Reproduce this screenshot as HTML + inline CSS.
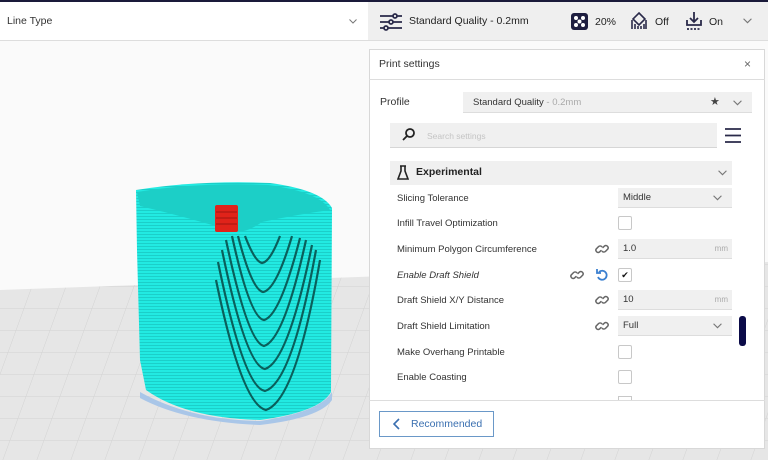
<!DOCTYPE html>
<html><head><meta charset="utf-8"><style>
*{margin:0;padding:0;box-sizing:border-box}
body{width:768px;height:460px;overflow:hidden;position:relative;background:#fafafa;font-family:"Liberation Sans",sans-serif;color:#1d1d2e}
.a{position:absolute}
.t{font-size:9.5px;color:#333}
.inp{position:absolute;left:618px;width:114px;height:20px;background:#f0f0f0;border-bottom:1px solid #ddd;font-size:9.5px;padding:4px 0 0 5px;color:#333}
.cb{position:absolute;left:618px;width:14px;height:14px;border:1px solid #c8c8c8;border-radius:2px;background:#fff}
.chev{position:absolute;right:10px;top:7px}
</style></head><body>
<svg width="0" height="0" style="position:absolute"><defs>
<symbol id="chv" viewBox="0 0 8 5"><path d="M0.5 0.5L4 4L7.5 0.5" fill="none" stroke="#777" stroke-width="1"/></symbol>
<symbol id="lnk" viewBox="0 0 14 14"><g fill="none" stroke="#666" stroke-width="1.5" stroke-linecap="round"><path d="M6 8.5L4.5 10a2.3 2.3 0 0 1-3.2-3.2L3.5 4.6a2.3 2.3 0 0 1 3.2 0"/><path d="M8 5.5L9.5 4a2.3 2.3 0 0 1 3.2 3.2L10.5 9.4a2.3 2.3 0 0 1-3.2 0"/></g></symbol>
</defs></svg>
<div class="a" style="left:0;top:0;width:768px;height:2px;background:#1a1a3a"></div>
<svg class="a" style="left:0;top:41px" width="768" height="419" viewBox="0 41 768 419">
<defs>
<pattern id="st" width="4" height="3" patternUnits="userSpaceOnUse"><rect width="4" height="3" fill="#22eae2"/><rect width="4" height="1" fill="#0f9e9a" opacity=".35"/></pattern>
<pattern id="grid" width="34" height="22" patternUnits="userSpaceOnUse" patternTransform="skewX(-20)"><rect width="34" height="22" fill="#e6e6e6"/><path d="M0 0H34M0 0V22" stroke="#d2d2d2" stroke-width="1" fill="none"/></pattern>
</defs>
<rect x="0" y="41" width="768" height="419" fill="#fafafa"/>
<polygon points="0,290 768,262 768,460 0,460" fill="url(#grid)"/>
<path d="M140,392 Q190,420 260,421 Q320,412 332,392 L332,400 Q320,418 260,425 Q185,422 140,398Z" fill="#a9c6e8"/>
<path d="M136,190 Q200,180 270,183 Q322,190 332,208 L331,392 Q320,412 260,420 Q185,418 146,390 L140,360 L137,250Z" fill="url(#st)"/>
<path d="M137,192 Q200,182 268,185 Q320,192 330,210 Q300,214 262,222 Q248,232 236,232 Q190,218 140,206Z" fill="#1ccfc7"/>
<g fill="none" stroke="#0a5f5b" stroke-width="2.2">
<path d="M245,236 Q255,262 262,263 Q270,262 280,236"/>
<path d="M238,236 Q252,290 263,292 Q276,290 292,236"/>
<path d="M232,236 Q250,318 264,320 Q280,316 300,238"/>
<path d="M226,240 Q248,343 264,346 Q284,340 306,240"/>
<path d="M222,250 Q246,366 265,369 Q288,362 312,245"/>
<path d="M218,262 Q244,388 265,391 Q292,383 316,250"/>
<path d="M216,280 Q242,405 266,410 Q296,400 320,260"/>
</g>
<rect x="215" y="205" width="23" height="27" rx="2" fill="#e0231a"/>
<path d="M216,212H237M216,218H237M216,224H237" stroke="#a01510" stroke-width="1"/>
</svg>
<div class="a" style="left:0;top:2px;width:368px;height:39px;background:#fff;border-bottom:1px solid #ddd"></div>
<div class="a" style="left:7px;top:15px;font-size:10.5px;color:#333">Line Type</div>
<svg class="a" style="left:349px;top:19px" width="8" height="5"><use href="#chv"/></svg>
<div class="a" style="left:368px;top:2px;width:400px;height:39px;background:#efefef;border-bottom:1px solid #ddd"></div>
<svg class="a" style="left:380px;top:13px" width="22" height="18" viewBox="0 0 22 18" fill="none" stroke="#2a2a4a" stroke-width="1.8"><path d="M0 3H22M0 9H22M0 15H22"/><circle cx="15" cy="3" r="2" fill="#efefef"/><circle cx="11" cy="9" r="2" fill="#efefef"/><circle cx="6" cy="15" r="2" fill="#efefef"/></svg>
<div class="a" style="left:409px;top:15px;font-size:10.5px;color:#222">Standard Quality - 0.2mm</div>
<svg class="a" style="left:571px;top:13px" width="17" height="17" viewBox="0 0 17 17"><rect width="17" height="17" rx="3" fill="#1e1e40"/><circle cx="5" cy="5" r="2" fill="#fff"/><circle cx="12" cy="5" r="2" fill="#fff"/><circle cx="8.5" cy="8.5" r="2" fill="#fff"/><circle cx="5" cy="12" r="2" fill="#fff"/><circle cx="12" cy="12" r="2" fill="#fff"/></svg>
<div class="a" style="left:595px;top:16px;font-size:10.5px;color:#222">20%</div>
<svg class="a" style="left:630px;top:11px" width="18" height="20" viewBox="0 0 18 20" fill="none" stroke="#2a2a4a" stroke-width="1.6"><path d="M9 2L15 8L9 14L3 8Z"/><path d="M2 9V18M5 13V18M8 15V18M11 15V18M14 13V18M16 9V18"/></svg>
<div class="a" style="left:655px;top:16px;font-size:10.5px;color:#222">Off</div>
<svg class="a" style="left:685px;top:11px" width="18" height="20" viewBox="0 0 18 20" fill="none" stroke="#2a2a4a" stroke-width="1.8"><path d="M9 1V11M5 7L9 11L13 7M2 9V14H16V9"/><path d="M2 18H16" stroke-dasharray="2 1.5"/></svg>
<div class="a" style="left:709px;top:16px;font-size:10.5px;color:#222">On</div>
<svg class="a" style="left:743px;top:18px" width="9" height="6"><use href="#chv"/></svg>
<div class="a" style="left:369px;top:49px;width:396px;height:400px;background:#fff;border:1px solid #d8d8d8"></div>
<div class="a" style="left:369px;top:79px;width:396px;height:1px;background:#ddd"></div>
<div class="a" style="left:379px;top:58px;font-size:10.5px;color:#333">Print settings</div>
<div class="a" style="left:744px;top:57px;font-size:12px;color:#666">×</div>
<div class="a" style="left:380px;top:96px;font-size:10.5px;color:#333">Profile</div>
<div class="a" style="left:463px;top:92px;width:289px;height:21px;background:#f0f0f0;border-bottom:1px solid #ddd"></div>
<div class="a" style="left:473px;top:97px;font-size:9.5px;color:#333">Standard Quality <span style="color:#aaa">- 0.2mm</span></div>
<div class="a" style="left:710px;top:95px;font-size:11px;color:#444">★</div>
<svg class="a" style="left:733px;top:100px" width="9" height="6"><use href="#chv"/></svg>
<div class="a" style="left:390px;top:123px;width:327px;height:25px;background:#f0f0f0;border-bottom:1px solid #d6d6d6"></div>
<svg class="a" style="left:402px;top:128px" width="13" height="13" viewBox="0 0 13 13" fill="none" stroke="#222" stroke-width="1.8"><circle cx="8" cy="5" r="4"/><path d="M5 8L1 12"/></svg>
<div class="a" style="left:427px;top:131px;font-size:8.5px;color:#c4c4c4">Search settings</div>
<svg class="a" style="left:725px;top:128px" width="16" height="15" viewBox="0 0 16 15" stroke="#2a2a4a" stroke-width="1.8"><path d="M0 1H16M0 7.5H16M0 14H16"/></svg>
<div class="a" style="left:390px;top:161px;width:342px;height:24px;background:#f0f0f0"></div>
<svg class="a" style="left:397px;top:165px" width="12" height="15" viewBox="0 0 12 15" fill="none" stroke="#222" stroke-width="1.6"><path d="M4 1V6L1 14H11L8 6V1M3 1H9"/></svg>
<div class="a" style="left:416px;top:166px;font-size:10.5px;font-weight:bold;color:#222">Experimental</div>
<svg class="a" style="left:718px;top:170px" width="9" height="6"><use href="#chv"/></svg>
<div class="a t" style="left:397px;top:193px">Slicing Tolerance</div>
<div class="inp" style="top:188px">Middle<svg class="chev" width="9" height="6"><use href="#chv"/></svg></div>
<div class="a t" style="left:397px;top:218px">Infill Travel Optimization</div>
<div class="cb" style="top:216px"></div>
<div class="a t" style="left:397px;top:244px">Minimum Polygon Circumference</div>
<svg class="a" style="left:595px;top:242px" width="14" height="14"><use href="#lnk"/></svg>
<div class="inp" style="top:239px">1.0<span class="a" style="right:4px;top:5px;font-size:8px;color:#aaa">mm</span></div>
<div class="a t" style="left:397px;top:270px;font-style:italic">Enable Draft Shield</div>
<svg class="a" style="left:570px;top:268px" width="14" height="14"><use href="#lnk"/></svg>
<svg class="a" style="left:596px;top:268px" width="12" height="14" viewBox="0 0 12 14" fill="none" stroke="#3a7fd0" stroke-width="1.8"><path d="M3 4A4.5 4.5 0 1 1 2 9"/><path d="M1 1V5H5"/></svg>
<div class="cb" style="top:268px;font-size:9px;text-align:center;line-height:12px;color:#111">✔</div>
<div class="a t" style="left:397px;top:295px">Draft Shield X/Y Distance</div>
<svg class="a" style="left:595px;top:293px" width="14" height="14"><use href="#lnk"/></svg>
<div class="inp" style="top:290px">10<span class="a" style="right:4px;top:5px;font-size:8px;color:#aaa">mm</span></div>
<div class="a t" style="left:397px;top:321px">Draft Shield Limitation</div>
<svg class="a" style="left:595px;top:319px" width="14" height="14"><use href="#lnk"/></svg>
<div class="inp" style="top:316px">Full<svg class="chev" width="9" height="6"><use href="#chv"/></svg></div>
<div class="a" style="left:739px;top:316px;width:7px;height:30px;border-radius:3px;background:#0b0b48"></div>
<div class="a t" style="left:397px;top:347px">Make Overhang Printable</div>
<div class="cb" style="top:345px"></div>
<div class="a t" style="left:397px;top:372px">Enable Coasting</div>
<div class="cb" style="top:370px"></div>
<div class="a" style="left:618px;top:396px;width:14px;height:4px;border:1px solid #c8c8c8;border-bottom:none"></div>
<div class="a" style="left:369px;top:400px;width:396px;height:1px;background:#ddd"></div>
<div class="a" style="left:379px;top:411px;width:115px;height:26px;border:1px solid #6a98c8;background:#fff"></div>
<svg class="a" style="left:393px;top:418px" width="7" height="12" viewBox="0 0 7 12" fill="none" stroke="#3a6fb0" stroke-width="1.6"><path d="M6 1L1 6L6 11"/></svg>
<div class="a" style="left:411px;top:418px;font-size:10.5px;color:#3a6fb0">Recommended</div>
</body></html>
